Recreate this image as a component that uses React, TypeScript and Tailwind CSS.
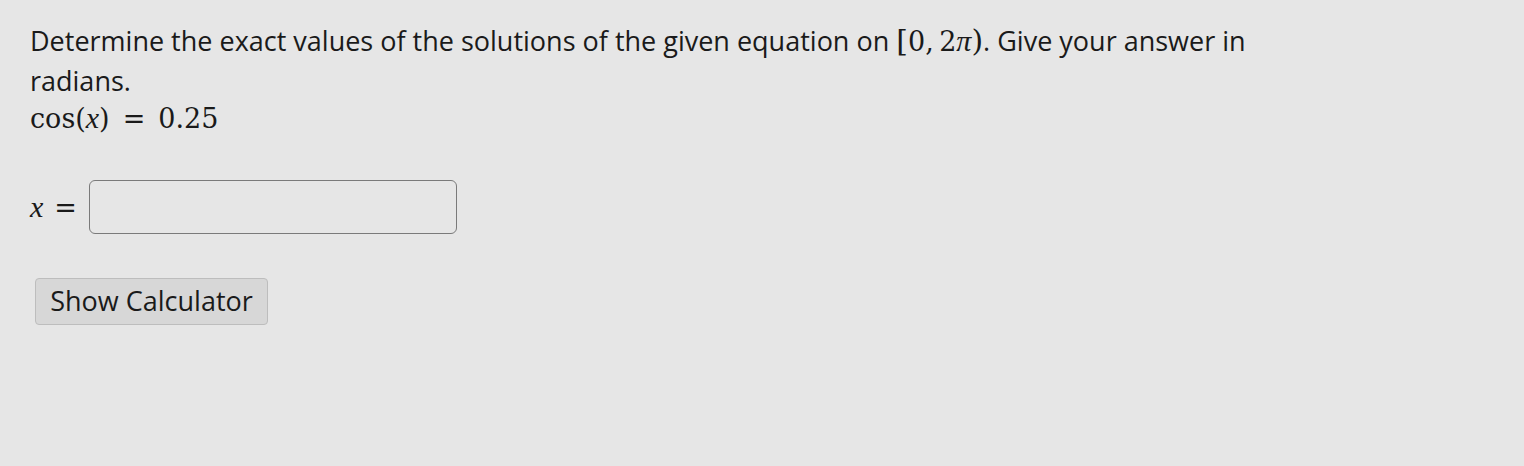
export default function App() {
  const math = { fontFamily: '"DejaVu Serif", "Liberation Serif", serif' };
  const ital = { fontFamily: '"Liberation Serif", "DejaVu Serif", serif' };
  return (
    <div className="min-h-[466px] w-full bg-[#e6e6e6] text-[#1a1a1a]" style={{ fontFamily: '"Open Sans", "Noto Sans", sans-serif' }}>
      <div className="pl-[30px] pt-[22px] w-[1290px]">
        <p className="text-[27px] leading-[38.5px]">
          Determine the exact values of the solutions of the given equation on{" "}
          <span className="whitespace-nowrap" style={math}>
            <span className="text-[30px] leading-none">[</span>0,{"\u2009"}2<i className="text-[30px] italic leading-none" style={ital}>π</i><span className="text-[30px] leading-none">)</span>
          </span>
          . Give your answer in radians.
        </p>
        <p className="text-[27px] leading-[38.5px]" style={math}>
          cos(<i className="text-[30px] italic leading-none" style={ital}>x</i>)<span className="mx-[13px]">=</span>0.25
        </p>
        <div className="mt-[41px] flex items-center">
          <span className="text-[27px] leading-none" style={math}>
            <i className="text-[30px] italic leading-none" style={ital}>x</i><span className="ml-[11px]">=</span>
          </span>
          <input
            type="text"
            className="ml-[12px] h-[54px] w-[368px] rounded-[6px] border border-[#7a7a7a] bg-[#e6e6e6] px-2 text-[24px] outline-none"
          />
        </div>
        <button className="mt-[44px] ml-[5px] h-[47px] w-[233px] rounded-[4px] border border-[#bdbdbd] bg-[#d7d7d7] text-[27px] text-[#1a1a1a]">
          Show Calculator
        </button>
      </div>
    </div>
  );
}
